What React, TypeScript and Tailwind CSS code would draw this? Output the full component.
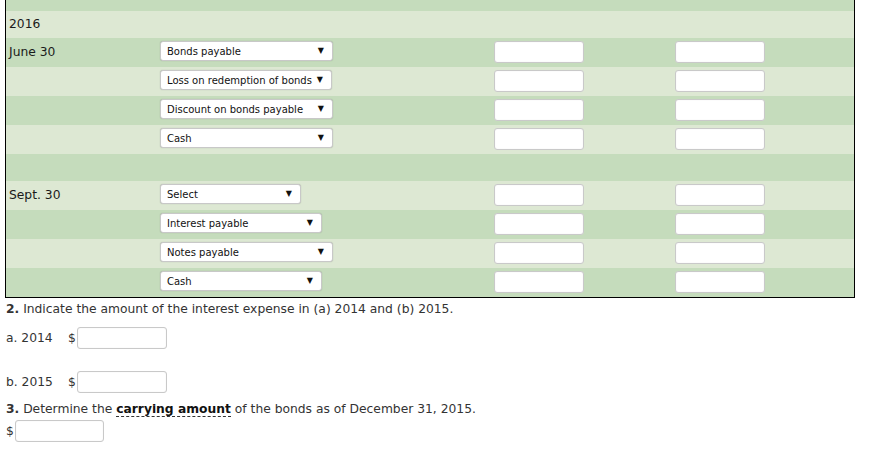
import type { ReactNode } from 'react';

type Row = {
  date?: string;
  account?: string;
  selectWidth?: number;
  height: number;
  tone: 'dark' | 'light';
  inputs?: boolean;
};

const rows: Row[] = [
  { height: 11, tone: 'dark' },
  { date: '2016', height: 27, tone: 'light' },
  { date: 'June 30', account: 'Bonds payable', selectWidth: 173, height: 29, tone: 'dark', inputs: true },
  { account: 'Loss on redemption of bonds', selectWidth: 172, height: 29, tone: 'light', inputs: true },
  { account: 'Discount on bonds payable', selectWidth: 173, height: 29, tone: 'dark', inputs: true },
  { account: 'Cash', selectWidth: 173, height: 29, tone: 'light', inputs: true },
  { height: 27, tone: 'dark' },
  { date: 'Sept. 30', account: 'Select', selectWidth: 141, height: 29, tone: 'light', inputs: true },
  { account: 'Interest payable', selectWidth: 162, height: 29, tone: 'dark', inputs: true },
  { account: 'Notes payable', selectWidth: 173, height: 29, tone: 'light', inputs: true },
  { account: 'Cash', selectWidth: 162, height: 29, tone: 'dark', inputs: true },
];

function FakeSelect({ label, width }: { label: string; width: number }) {
  return (
    <div
      className="flex h-[20px] items-center justify-between rounded-[3px] border border-[#c8c8c8] bg-white pl-[6px] pr-[8px] text-[10px] text-[#111] shadow-[0_0_1px_rgba(0,0,0,0.25)]"
      style={{ width }}
    >
      <span className="whitespace-nowrap">{label}</span>
      <span className="text-[8px] leading-none">▼</span>
    </div>
  );
}

function AmountBox({ width = 90 }: { width?: number }) {
  return (
    <div
      className="h-[22px] rounded-[3px] border border-[#c9c9c9] bg-white shadow-[inset_0_0_1px_rgba(0,0,0,0.15)]"
      style={{ width }}
    />
  );
}

function Dollar({ children }: { children: ReactNode }) {
  return <span className="text-[12.3px] text-[#333]">{children}</span>;
}

export default function App() {
  return (
    <div className="h-[455px] w-[878px] bg-white font-['DejaVu_Sans',Verdana,sans-serif] text-[#333]">
      <div className="ml-[5px] w-[850px] border-x border-b border-black">
        {rows.map((row, i) => (
          <div
            key={i}
            className={`grid grid-cols-[154px_334px_181px_1fr] ${
              row.tone === 'dark' ? 'bg-[#c5dcbc]' : 'bg-[#dde8d3]'
            }`}
            style={{ height: row.height }}
          >
            <div className="flex items-center pl-[3px] text-[12.3px] text-[#1a1a1a]">{row.date}</div>
            <div className="pt-[3px]">
              {row.account && <FakeSelect label={row.account} width={row.selectWidth ?? 173} />}
            </div>
            <div className="pt-[3px]">{row.inputs && <AmountBox />}</div>
            <div className="pt-[3px]">{row.inputs && <AmountBox />}</div>
          </div>
        ))}
      </div>

      <div className="pl-[6px] text-[12.3px]">
        <p className="mt-[2px] leading-[18px]">
          <span className="font-bold">2.</span> Indicate the amount of the interest expense in (a) 2014 and (b) 2015.
        </p>

        <div className="mt-[9px] flex items-center">
          <span className="w-[62px]">a. 2014</span>
          <Dollar>$</Dollar>
          <div className="ml-[1px]">
            <AmountBox />
          </div>
        </div>

        <div className="mt-[22px] flex items-center">
          <span className="w-[62px]">b. 2015</span>
          <Dollar>$</Dollar>
          <div className="ml-[1px]">
            <AmountBox />
          </div>
        </div>

        <p className="mt-[7px] leading-[18px]">
          <span className="font-bold">3.</span> Determine the{' '}
          <span className="border-b border-dashed border-[#333] font-bold text-[#111]">carrying amount</span> of the
          bonds as of December 31, 2015.
        </p>

        <div className="mt-[2px] flex items-center">
          <Dollar>$</Dollar>
          <div className="ml-[1px]">
            <AmountBox width={89} />
          </div>
        </div>
      </div>
    </div>
  );
}
